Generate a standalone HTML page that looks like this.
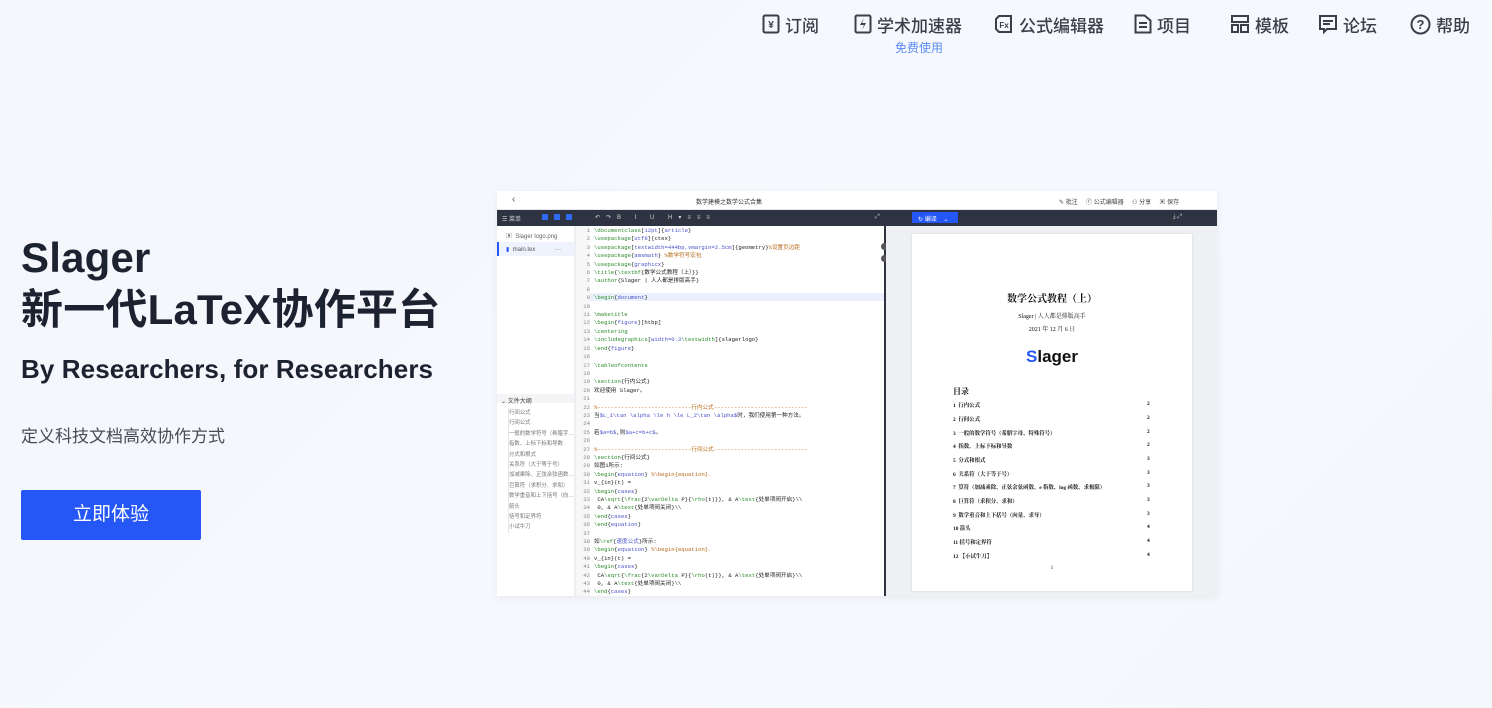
<!DOCTYPE html>
<html><head><meta charset="utf-8"><style>
*{margin:0;padding:0;box-sizing:border-box}
body{width:1492px;height:708px;overflow:hidden;background:linear-gradient(135deg,#f3f6fb 0%,#f6f8fd 50%,#f4f7fc 100%);font-family:"Liberation Sans","Noto Sans CJK SC",sans-serif;position:relative;color:#1f2329}
.nav{position:absolute;top:12px;font-size:17px;color:#3a3f4a;font-weight:500;display:flex;align-items:center;height:24px}
.nav svg{margin-right:5px}
.sub{position:absolute;left:895px;top:39px;font-size:12px;color:#5b8cf5}
h1{position:absolute;left:21px;top:232px;font-size:42px;font-weight:700;line-height:52px;color:#1d2230;letter-spacing:.2px}
h2{position:absolute;left:21px;top:354px;font-size:26px;font-weight:700;color:#1d2230;letter-spacing:.1px}
.desc{position:absolute;left:21px;top:422px;font-size:17px;color:#474c57}
.btn{position:absolute;left:21px;top:490px;width:180px;height:50px;background:#2457f6;color:#fff;font-size:19px;text-align:center;line-height:50px;border-radius:2px}
.shot{position:absolute;left:497px;top:191px;width:720px;height:405px;background:#fff;box-shadow:0 2px 8px rgba(0,0,0,.06);overflow:hidden;font-size:6px}
.hd{position:absolute;left:0;top:0;width:720px;height:19px;background:#fff;border-bottom:1px solid #e5e7eb}
.tb{position:absolute;left:0;top:19px;width:720px;height:16px;background:#2d3340;color:#cdd2da}
.side{position:absolute;left:0;top:35px;width:77px;height:370px;background:#fff}
.code{position:absolute;left:79px;top:35px;width:308px;height:370px;background:#fff;font-family:"Liberation Mono","Noto Sans CJK SC",monospace;font-size:5.6px;line-height:8.4px;color:#222}
.code .ln{position:absolute;left:0;width:14px;text-align:right;color:#888}
.code .tx{position:absolute;left:18px;white-space:pre}
.k{color:#2a8a2a}.a{color:#4a52c8}.c{color:#b86a1a}
.prev{position:absolute;left:389px;top:35px;width:331px;height:370px;background:#eef0f4}
.page{position:absolute;left:26px;top:8px;width:280px;height:357px;background:#fff;box-shadow:0 0 3px rgba(0,0,0,.1);font-family:"Liberation Serif","Noto Serif CJK SC",serif;color:#111}
.toc{position:absolute;left:41px;font-size:5.4px;font-weight:700;width:200px}
.toc span{position:absolute;left:194px}
</style></head><body>

<div class="nav" style="left:762px"><svg width="18" height="20" viewBox="0 0 18 20"><rect x="1.5" y="1.5" width="15" height="17" rx="1.5" fill="none" stroke="#3a3f4a" stroke-width="2"/><text x="9" y="14" font-size="10" text-anchor="middle" fill="#3a3f4a" font-weight="700">¥</text></svg>订阅</div>
<div class="nav" style="left:854px"><svg width="18" height="20" viewBox="0 0 18 20"><rect x="1.5" y="1.5" width="15" height="17" rx="1.5" fill="none" stroke="#3a3f4a" stroke-width="2"/><path d="M10 4L6 11h4l-2 5 4-7H8z" fill="#3a3f4a"/></svg>学术加速器</div>
<div class="sub">免费使用</div>
<div class="nav" style="left:994px"><svg width="20" height="20" viewBox="0 0 20 20"><path d="M5 2h12v16H5l-3-3V5z" fill="none" stroke="#3a3f4a" stroke-width="2"/><text x="10" y="14" font-size="8" text-anchor="middle" fill="#3a3f4a" font-weight="700">Fx</text></svg>公式编辑器</div>
<div class="nav" style="left:1134px"><svg width="18" height="20" viewBox="0 0 18 20"><path d="M1.5 1.5h9l6 5v12h-15z" fill="none" stroke="#3a3f4a" stroke-width="2"/><path d="M5 9h8M5 13h8" stroke="#3a3f4a" stroke-width="2"/></svg>项目</div>
<div class="nav" style="left:1230px"><svg width="20" height="20" viewBox="0 0 20 20"><rect x="2" y="2" width="16" height="6" fill="none" stroke="#3a3f4a" stroke-width="2"/><rect x="2" y="11" width="6" height="7" fill="none" stroke="#3a3f4a" stroke-width="2"/><rect x="11" y="11" width="7" height="7" fill="none" stroke="#3a3f4a" stroke-width="2"/></svg>模板</div>
<div class="nav" style="left:1318px"><svg width="20" height="20" viewBox="0 0 20 20"><path d="M2 2h16v13H9l-3 3v-3H2z" fill="none" stroke="#3a3f4a" stroke-width="2"/><path d="M5 7h10M5 10h7" stroke="#3a3f4a" stroke-width="2"/></svg>论坛</div>
<div class="nav" style="left:1410px"><svg width="21" height="21" viewBox="0 0 21 21"><circle cx="10.5" cy="10.5" r="9" fill="none" stroke="#3a3f4a" stroke-width="2"/><text x="10.5" y="15" font-size="13" text-anchor="middle" fill="#3a3f4a" font-weight="700">?</text></svg>帮助</div>

<h1>Slager<br>新一代LaTeX协作平台</h1>
<h2>By Researchers, for Researchers</h2>
<div class="desc">定义科技文档高效协作方式</div>
<div class="btn">立即体验</div>

<div class="shot">
<div class="hd"><span style="position:absolute;left:15px;top:3px;font-size:10px;color:#555">‹</span><span style="position:absolute;left:199px;top:6px;color:#333">数学建模之数学公式合集</span>
<span style="position:absolute;left:562px;top:6px;color:#444">✎ 批注 &nbsp;&nbsp;&nbsp; ⓕ 公式编辑器 &nbsp;&nbsp;&nbsp; ⚇ 分享 &nbsp;&nbsp;&nbsp; ▣ 保存</span></div>
<div class="tb"><span style="position:absolute;left:5px;top:4px">☰ 菜单</span>
<span style="position:absolute;left:45px;top:4px;width:6px;height:6px;background:#2f6bf6"></span><span style="position:absolute;left:57px;top:4px;width:6px;height:6px;background:#2f6bf6"></span><span style="position:absolute;left:69px;top:4px;width:6px;height:6px;background:#2f6bf6"></span>
<span style="position:absolute;left:98px;top:4px;letter-spacing:6px">↶↷B I U H▾≡≡≡</span>
<span style="position:absolute;left:378px;top:4px">⤢</span>
<span style="position:absolute;left:415px;top:2px;width:46px;height:11px;background:#2457f6;color:#fff;padding:2px 0 0 6px">↻ 编译 &nbsp;&nbsp; ⌄</span>
<span style="position:absolute;left:676px;top:4px">⤓ ⤢</span></div>
<div class="side">
<div style="position:absolute;left:9px;top:5px;color:#666">▣ &nbsp;Slager logo.png</div>
<div style="position:absolute;left:0;top:16px;width:77px;height:14px;background:#eef3fe;border-left:2px solid #2457f6"></div>
<div style="position:absolute;left:9px;top:20px;color:#555"><span style="color:#2457f6">▮</span> &nbsp;main.tex <span style="margin-left:18px">···</span></div>
<div style="position:absolute;left:0;top:168px;width:77px;height:9px;background:#f3f4f6;padding:2px 0 0 4px;color:#444">⌄ 文件大纲</div>
<div style="position:absolute;left:11px;top:182px;color:#777;line-height:10.4px;font-size:5.4px;border-left:1px solid #e5e5e5">行间公式<br>行间公式<br>一般的数学符号（希腊字…<br>指数、上标下标和导数<br>分式和根式<br>关系符（大于等于号）<br>加减乘除、正弦余弦函数…<br>巨算符（求积分、求和）<br>数学重音和上下括号（向…<br>箭头<br>括号和定界符<br>小试牛刀</div>
</div>
<div style="position:absolute;left:77px;top:35px;width:2px;height:370px;background:#eceef1"></div>
<div class="code">
<div style="position:absolute;left:0;top:0;width:14px;height:370px;background:#f7f7f7"></div>
<div style="position:absolute;left:14px;top:67px;width:294px;height:8px;background:#eaf1fd"></div>
<div class="ln" style="top:1px">1<br>2<br>3<br>4<br>5<br>6<br>7<br>8<br>9<br>10<br>11<br>12<br>13<br>14<br>15<br>16<br>17<br>18<br>19<br>20<br>21<br>22<br>23<br>24<br>25<br>26<br>27<br>28<br>29<br>30<br>31<br>32<br>33<br>34<br>35<br>36<br>37<br>38<br>39<br>40<br>41<br>42<br>43<br>44</div>
<div class="tx" style="top:1px"><span class="k">\documentclass</span>[<span class="a">12pt</span>]{<span class="a">article</span>}
<span class="k">\usepackage</span>[<span class="a">utf8</span>]{ctex}
<span class="k">\usepackage</span>[<span class="a">textwidth=444bp,vmargin=2.5cm</span>]{geometry}<span class="c">%设置页边距</span>
<span class="k">\usepackage</span>{<span class="a">amsmath</span>} <span class="c">%数学符号宏包</span>
<span class="k">\usepackage</span>{<span class="a">graphicx</span>}
<span class="k">\title</span>{<span class="k">\textbf</span>{数学公式教程（上）}}
<span class="k">\author</span>{Slager | 人人都是排版高手}

<span class="k">\begin</span>{<span class="a">document</span>}

<span class="k">\maketitle</span>
<span class="k">\begin</span>{<span class="a">figure</span>}[htbp]
<span class="k">\centering</span>
<span class="k">\includegraphics</span>[<span class="a">width=0.3</span><span class="k">\textwidth</span>]{slagerlogo}
<span class="k">\end</span>{<span class="a">figure</span>}

<span class="k">\tableofcontents</span>

<span class="k">\section</span>{行内公式}
欢迎使用 Slager。

<span class="c">%----------------------------行内公式----------------------------</span>
当<span class="a">$L_1\tan \alpha \le h \le L_2\tan \alpha$</span>时，我们使用第一种方法。

若<span class="a">$a=b$</span>,则<span class="a">$a+c=b+c$</span>。

<span class="c">%----------------------------行间公式----------------------------</span>
<span class="k">\section</span>{行间公式}
如图1所示:
<span class="k">\begin</span>{<span class="a">equation</span>} <span class="c">%\begin{equation}.</span>
v_{in}(t) =
<span class="k">\begin</span>{<span class="a">cases</span>}
 CA<span class="k">\sqrt</span>{<span class="k">\frac</span>{2<span class="k">\varDelta</span> P}{<span class="k">\rho</span>(t)}}, &amp; A<span class="k">\text</span>{处单项阀开启}\\
 0, &amp; A<span class="k">\text</span>{处单项阀关闭}\\
<span class="k">\end</span>{<span class="a">cases</span>}
<span class="k">\end</span>{<span class="a">equation</span>}

如<span class="k">\ref</span>{<span class="a">速度公式</span>}所示:
<span class="k">\begin</span>{<span class="a">equation</span>} <span class="c">%\begin{equation}.</span>
v_{in}(t) =
<span class="k">\begin</span>{<span class="a">cases</span>}
 CA<span class="k">\sqrt</span>{<span class="k">\frac</span>{2<span class="k">\varDelta</span> P}{<span class="k">\rho</span>(t)}}, &amp; A<span class="k">\text</span>{处单项阀开启}\\
 0, &amp; A<span class="k">\text</span>{处单项阀关闭}\\
<span class="k">\end</span>{<span class="a">cases</span>}</div>
</div>
<div style="position:absolute;left:387px;top:35px;width:2px;height:370px;background:#2d3340"></div>
<div style="position:absolute;left:384px;top:52px;width:7px;height:7px;border-radius:50%;background:#555"></div>
<div style="position:absolute;left:384px;top:64px;width:7px;height:7px;border-radius:50%;background:#555"></div>
<div class="prev"><div class="page">
<div style="position:absolute;top:56px;width:100%;text-align:center;font-size:10px;font-weight:700">数学公式教程（上）</div>
<div style="position:absolute;top:77px;width:100%;text-align:center;font-size:6px">Slager | 人人都是排版高手</div>
<div style="position:absolute;top:90px;width:100%;text-align:center;font-size:6px">2021 年 12 月 6 日</div>
<div style="position:absolute;top:113px;width:100%;text-align:center;font-size:17px;font-weight:700;font-family:'Liberation Sans',sans-serif;color:#111"><span style="color:#2457f6">S</span>lager</div>
<div style="position:absolute;left:41px;top:152px;font-size:8px;font-weight:700">目录</div>
<div class="toc" style="top:167px">1 &nbsp;行内公式<span>2</span></div>
<div class="toc" style="top:181px">2 &nbsp;行间公式<span>2</span></div>
<div class="toc" style="top:195px">3 &nbsp;一般的数学符号（希腊字母、特殊符号）<span>2</span></div>
<div class="toc" style="top:208px">4 &nbsp;指数、上标下标和导数<span>2</span></div>
<div class="toc" style="top:222px">5 &nbsp;分式和根式<span>3</span></div>
<div class="toc" style="top:236px">6 &nbsp;关系符（大于等于号）<span>3</span></div>
<div class="toc" style="top:249px">7 &nbsp;算符（加减乘除、正弦余弦函数、e 指数、log 函数、求极限）<span>3</span></div>
<div class="toc" style="top:263px">8 &nbsp;巨算符（求积分、求和）<span>3</span></div>
<div class="toc" style="top:277px">9 &nbsp;数学重音和上下括号（向量、求导）<span>3</span></div>
<div class="toc" style="top:290px">10 箭头<span>4</span></div>
<div class="toc" style="top:304px">11 括号和定界符<span>4</span></div>
<div class="toc" style="top:318px">12 【小试牛刀】<span>4</span></div>
<div style="position:absolute;top:332px;width:100%;text-align:center;font-size:5px">1</div>
</div></div>
</div>
</body></html>
